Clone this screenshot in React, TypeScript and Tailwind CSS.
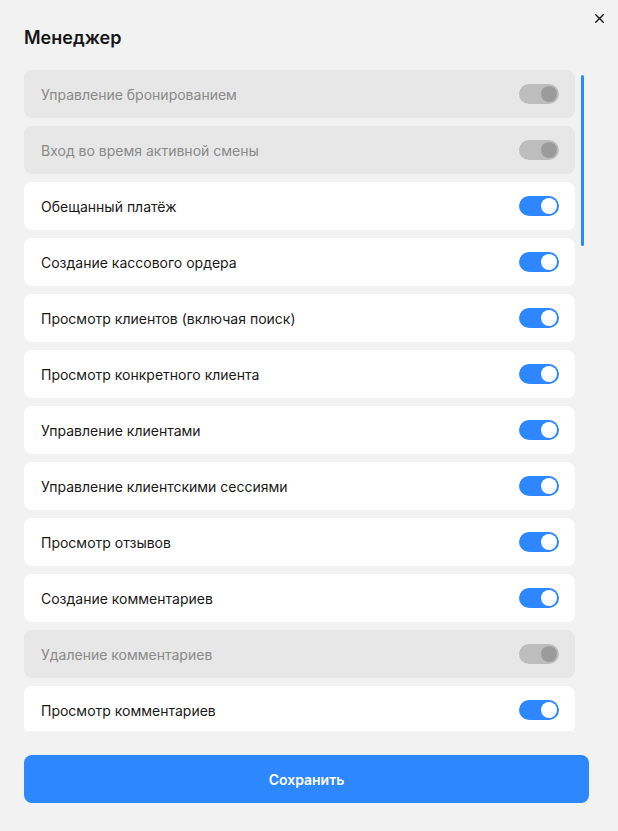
import { X } from 'lucide-react'

interface Permission {
  label: string;
  enabled: boolean;
  locked: boolean;
}

const permissions: Permission[] = [
  { label: 'Управление бронированием', enabled: true, locked: true },
  { label: 'Вход во время активной смены', enabled: true, locked: true },
  { label: 'Обещанный платёж', enabled: true, locked: false },
  { label: 'Создание кассового ордера', enabled: true, locked: false },
  { label: 'Просмотр клиентов (включая поиск)', enabled: true, locked: false },
  { label: 'Просмотр конкретного клиента', enabled: true, locked: false },
  { label: 'Управление клиентами', enabled: true, locked: false },
  { label: 'Управление клиентскими сессиями', enabled: true, locked: false },
  { label: 'Просмотр отзывов', enabled: true, locked: false },
  { label: 'Создание комментариев', enabled: true, locked: false },
  { label: 'Удаление комментариев', enabled: true, locked: true },
  { label: 'Просмотр комментариев', enabled: true, locked: false },
]

const Toggle = ({ locked }: { locked: boolean }) => (
  <div
    className={
      locked
        ? 'w-10 h-5 rounded-full bg-[#bdbdbd] flex items-center justify-end px-[2px]'
        : 'w-10 h-5 rounded-full bg-[#2d88ff] flex items-center justify-end px-[2px]'
    }
  >
    <div className={locked ? 'w-4 h-4 rounded-full bg-[#9b9b9b]' : 'w-4 h-4 rounded-full bg-white'} />
  </div>
)

export default function App() {
  return (
    <div className="w-[618px] h-[831px] bg-[#f2f2f2] relative font-['Inter',sans-serif] overflow-hidden">
      <button className="absolute top-[9px] right-[9px] text-[#111] p-0.5">
        <X size={15} strokeWidth={2.2} />
      </button>

      <div className="px-6 pt-[26px]">
        <h1 className="text-[18px] leading-6 font-semibold text-[#161616]">Менеджер</h1>

        <div className="flex gap-[6px] mt-[20px]">
          <div className="w-[551px] h-[661px] overflow-hidden flex flex-col gap-2">
            {permissions.map((p) => (
              <div
                key={p.label}
                className={
                  p.locked
                    ? 'shrink-0 h-12 rounded-lg bg-[#e7e7e7] flex items-center justify-between pl-[17px] pr-4'
                    : 'shrink-0 h-12 rounded-lg bg-white flex items-center justify-between pl-[17px] pr-4'
                }
              >
                <span className={p.locked ? 'text-[14px] text-[#8a8a8a]' : 'text-[14px] text-[#1a1a1a]'}>
                  {p.label}
                </span>
                <Toggle locked={p.locked} />
              </div>
            ))}
          </div>
          <div className="w-[3px] h-[171px] mt-[5px] rounded-full bg-[#2d88ff]" />
        </div>

        <button className="mt-6 w-[565px] h-12 rounded-lg bg-[#2d88ff] text-white text-[14px] font-semibold">
          Сохранить
        </button>
      </div>
    </div>
  )
}
